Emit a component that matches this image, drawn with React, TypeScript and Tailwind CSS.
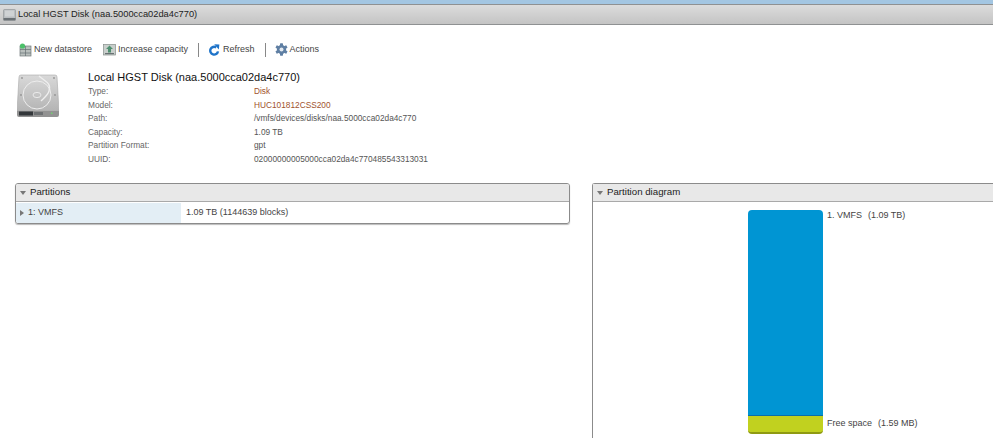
import React from "react";

function DiskSmall() {
  return (
    <svg width="13" height="13" viewBox="0 0 13 13">
      <rect x="0.5" y="1.5" width="12" height="10.5" rx="1" fill="#b9bdc0" stroke="#8b9094" strokeWidth="0.6" />
      <rect x="2" y="2.5" width="9" height="6" fill="#cfd2d4" />
      <rect x="0.5" y="10" width="12" height="2.5" fill="#6a7075" />
    </svg>
  );
}

function NewDs() {
  return (
    <svg width="13" height="14" viewBox="0 0 13 14">
      <rect x="1" y="3" width="11" height="10" fill="#b9bfbd" stroke="#70787a" strokeWidth="0.7" />
      <path d="M1 6.5h11M1 10h11M6.5 3v10" stroke="#667072" strokeWidth="0.7" />
      <circle cx="3.5" cy="3" r="2.6" fill="#4cc06a" />
    </svg>
  );
}

function IncCap() {
  return (
    <svg width="13" height="13" viewBox="0 0 13 13">
      <rect x="0.5" y="1.5" width="12" height="10.5" fill="#c9cfcc" stroke="#858d8a" strokeWidth="0.7" />
      <path d="M6.5 2.5 10 6H8v3.5H5V6H3z" fill="#4f8f70" />
      <rect x="2" y="10" width="9" height="1.2" fill="#6a7274" />
    </svg>
  );
}

function RefreshIcon() {
  return (
    <svg width="12" height="12" viewBox="0 0 12 12">
      <path d="M8.2 3.4A3.9 3.9 0 1 0 10 7.4" fill="none" stroke="#1f74c9" strokeWidth="2.4" />
      <path d="M6.2 0.2 11.4 0.4 10.8 5.6z" fill="#1f74c9" />
    </svg>
  );
}

function Gear() {
  return (
    <svg width="13" height="13" viewBox="0 0 13 13">
      <g fill="#5f7fa3">
        <circle cx="6.5" cy="6.5" r="4.6" />
        <rect x="5" y="0.3" width="3" height="12.4" rx="0.6" />
        <rect x="5" y="0.3" width="3" height="12.4" rx="0.6" transform="rotate(60 6.5 6.5)" />
        <rect x="5" y="0.3" width="3" height="12.4" rx="0.6" transform="rotate(120 6.5 6.5)" />
      </g>
      <circle cx="6.5" cy="6.5" r="2" fill="#e4eaf1" />
    </svg>
  );
}

function HardDisk() {
  return (
    <svg width="42" height="44" viewBox="0 0 42 44">
      <defs>
        <linearGradient id="hd" x1="0" y1="0" x2="0" y2="1">
          <stop offset="0" stopColor="#d9d9d9" />
          <stop offset="1" stopColor="#b4b4b4" />
        </linearGradient>
      </defs>
      <path d="M4 1h34a2 2 0 0 1 2 2l2 34H0L2 3a2 2 0 0 1 2-2z" fill="url(#hd)" stroke="#a8a8a8" strokeWidth="0.6" />
      <circle cx="20" cy="21" r="14" fill="none" stroke="#ededed" strokeWidth="1" />
      <ellipse cx="20" cy="21" rx="4" ry="2.6" fill="none" stroke="#ededed" strokeWidth="0.9" />
      <path d="M22 2c5 5 13 7 10 15-1 4-5 7-8 10" fill="none" stroke="#efefef" strokeWidth="1.3" />
      <circle cx="5" cy="4" r="0.9" fill="#949494" />
      <circle cx="37" cy="4" r="0.9" fill="#949494" />
      <circle cx="4" cy="21" r="0.9" fill="#949494" />
      <circle cx="38" cy="21" r="0.9" fill="#949494" />
      <path d="M0 37h42v4a2 2 0 0 1-2 2H2a2 2 0 0 1-2-2z" fill="#929292" />
      <rect x="2" y="37.5" width="14" height="4" fill="#33373a" />
      <rect x="17" y="38" width="9" height="3" fill="#6d7072" />
      <rect x="34" y="38.5" width="1.5" height="1.5" fill="#6fd06f" />
    </svg>
  );
}

const rows: [string, string, string?][] = [
  ["Type:", "Disk", "text-[#a0522d]"],
  ["Model:", "HUC101812CSS200", "text-[#a0522d]"],
  ["Path:", "/vmfs/devices/disks/naa.5000cca02da4c770"],
  ["Capacity:", "1.09 TB"],
  ["Partition Format:", "gpt"],
  ["UUID:", "02000000005000cca02da4c770485543313031"],
];

function Tri() {
  return <span className="mr-[4px] h-0 w-0 border-x-[3px] border-t-[4px] border-x-transparent border-t-[#777]" />;
}

export default function App() {
  return (
    <div className="h-[438px] w-[993px] overflow-hidden bg-white font-['Liberation_Sans',Arial,sans-serif] text-[#444]">
      <div className="h-[4px] bg-[#a3c6e2]" />
      <div className="flex h-[21px] items-center gap-[2px] border-y border-y-[#8f9192] bg-gradient-to-b from-[#dcdcdc] to-[#c4c4c4] pl-[3px] text-[9.3px] text-[#222]">
        <DiskSmall />
        <span>Local HGST Disk (naa.5000cca02da4c770)</span>
      </div>

      <div className="mt-[10px] flex h-[24px] items-center pl-[19px] pt-[5px] text-[9px] text-[#444]">
        <span className="flex items-center gap-[2px]"><NewDs />New datastore</span>
        <span className="ml-[11px] flex items-center gap-[2px]"><IncCap />Increase capacity</span>
        <span className="ml-[10px] h-[14px] w-px bg-[#888]" />
        <span className="ml-[9px] flex items-center gap-[3px]"><RefreshIcon />Refresh</span>
        <span className="ml-[10px] h-[14px] w-px bg-[#888]" />
        <span className="ml-[9px] flex items-center gap-[2px]"><Gear />Actions</span>
      </div>

      <div className="mt-[12px] flex pl-[17px]">
        <div className="w-[43px] pt-[3px]"><HardDisk /></div>
        <div className="ml-[28px]">
          <div className="text-[11px] leading-[13px] text-[#111]">Local HGST Disk (naa.5000cca02da4c770)</div>
          <div className="mt-[1px] text-[8.3px] leading-[13.6px]">
            {rows.map(([k, v, c]) => (
              <div key={k} className="flex">
                <span className="w-[166px] text-[#666]">{k}</span>
                <span className={c ?? "text-[#555]"}>{v}</span>
              </div>
            ))}
          </div>
        </div>
      </div>

      <div className="mt-[16px] flex items-start pl-[15px]">
        <section className="h-[41px] w-[555px] shrink-0 overflow-hidden rounded-[3px] border border-[#8b8b8b] shadow-[0_1px_1px_#bbb]">
          <div className="flex h-[18px] items-center border-b border-b-[#a9a9a9] bg-[#e8e8e8] pl-[4px] pt-[1px] text-[9.7px] text-[#222]">
            <Tri />Partitions
          </div>
          <div className="flex h-[21px] pt-[1px] text-[9px] text-[#444]">
            <div className="flex w-[165px] items-center bg-[#e3eef5] pl-[4px]">
              <span className="mr-[4px] h-0 w-0 border-y-[3px] border-l-[4px] border-y-transparent border-l-[#777]" />
              1: VMFS
            </div>
            <div className="flex items-center pl-[5px]">1.09 TB (1144639 blocks)</div>
          </div>
        </section>

        <section className="ml-[22px] h-[256px] w-[420px] shrink-0 rounded-tl-[3px] border-l border-t border-[#8b8b8b]">
          <div className="flex h-[18px] items-center border-b border-b-[#a9a9a9] bg-[#e8e8e8] pl-[4px] pt-[1px] text-[9.7px] text-[#222]">
            <Tri />Partition diagram
          </div>
          <div className="flex pl-[155px] pt-[8px]">
            <div className="w-[75px]">
              <div className="h-[206px] rounded-t-[4px] border-b border-b-[#0a6ea8] bg-[#0095d3]" />
              <div className="h-[18px] rounded-b-[4px] border-b-2 border-b-[#8f9a12] bg-[#c1d11f]" />
            </div>
            <div className="ml-[4px] text-[9px] text-[#444]">
              <div className="flex gap-[6px] leading-[11px]"><span>1. VMFS</span><span>(1.09 TB)</span></div>
              <div className="mt-[197px] flex gap-[6px] leading-[11px]"><span>Free space</span><span>(1.59 MB)</span></div>
            </div>
          </div>
        </section>
      </div>
    </div>
  );
}
